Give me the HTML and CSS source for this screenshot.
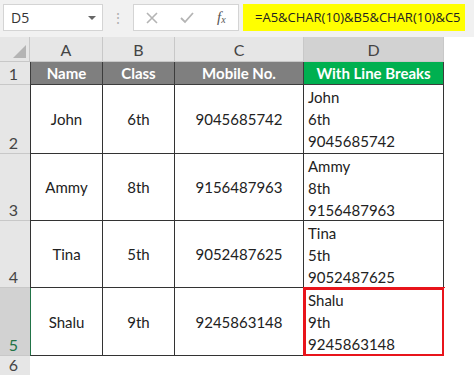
FILE: index.html
```
<!DOCTYPE html>
<html>
	<head>
		<meta charset="utf-8" />
		<title>Line Breaks</title>
		<link rel="stylesheet" href="styles.css">
	</head>
	<body>
		<div class="toolbar">
			<div class="namebox">
				<span>D5</span>
				<span class="arrow"></span>
			</div>
			<div class="dots">&#8942;</div>
			<div class="fxbox">
				<svg class="ico" width="14" height="14" viewBox="0 0 14 14"><path d="M2 2 L12 12 M12 2 L2 12" stroke="#b4b4b4" stroke-width="1.6" fill="none"/></svg>
				<svg class="ico" width="16" height="14" viewBox="0 0 16 14"><path d="M2 7 L6 11 L14 2" stroke="#b4b4b4" stroke-width="1.8" fill="none"/></svg>
				<span class="fx">f<sub>x</sub></span>
			</div>
			<div class="formula">=A5&amp;CHAR(10)&amp;B5&amp;CHAR(10)&amp;C5</div>
		</div>

		<div class="sheet">
			<div class="corner"><span></span></div>
			<div class="colhead">A</div>
			<div class="colhead">B</div>
			<div class="colhead">C</div>
			<div class="colhead sel">D</div>
			<div class="blank"></div>

			<div class="rowhead">1</div>
			<div class="cell head first">Name</div>
			<div class="cell head">Class</div>
			<div class="cell head">Mobile No.</div>
			<div class="cell head green">With Line Breaks</div>
			<div class="blank"></div>

			<div class="rowhead">2</div>
			<div class="cell first">John</div>
			<div class="cell">6th</div>
			<div class="cell">9045685742</div>
			<div class="cell lines">John<br>6th<br>9045685742</div>
			<div class="blank"></div>

			<div class="rowhead">3</div>
			<div class="cell first">Ammy</div>
			<div class="cell">8th</div>
			<div class="cell">9156487963</div>
			<div class="cell lines">Ammy<br>8th<br>9156487963</div>
			<div class="blank"></div>

			<div class="rowhead">4</div>
			<div class="cell first">Tina</div>
			<div class="cell">5th</div>
			<div class="cell">9052487625</div>
			<div class="cell lines">Tina<br>5th<br>9052487625</div>
			<div class="blank"></div>

			<div class="rowhead sel">5</div>
			<div class="cell first active">Shalu</div>
			<div class="cell">9th</div>
			<div class="cell">9245863148</div>
			<div class="cell lines marked">Shalu<br>9th<br>9245863148</div>
			<div class="blank"></div>

			<div class="rowhead last">6</div>
			<div class="empty"></div>
			<div class="empty"></div>
			<div class="empty"></div>
			<div class="empty"></div>
			<div class="blank"></div>
		</div>
	</body>
</html>
```

FILE: styles.css
```
html, body {
	margin: 0;
	padding: 0;
	background: #ffffff;
}

body {
	width: 474px;
	height: 375px;
	overflow: hidden;
	font-family: Lato, "Open Sans", sans-serif;
	color: #222222;
}

/* formula bar */
.toolbar {
	height: 37px;
	background: #f1f1f1;
	display: flex;
	align-items: flex-start;
	padding-top: 4px;
	box-sizing: border-box;
}

.namebox {
	margin-left: 3px;
	width: 100px;
	height: 27px;
	box-sizing: border-box;
	background: #fff;
	border: 1px solid #d4d4d4;
	display: flex;
	align-items: center;
	justify-content: space-between;
	padding: 0 6px 0 7px;
	font-family: "Open Sans", sans-serif;
	font-size: 14px;
	color: #333;
}

.namebox .arrow {
	width: 0;
	height: 0;
	border-left: 4px solid transparent;
	border-right: 4px solid transparent;
	border-top: 4px solid #666;
}

.dots {
	width: 30px;
	text-align: center;
	line-height: 27px;
	color: #b0b0b0;
	font-size: 14px;
}

.fxbox {
	width: 106px;
	height: 27px;
	box-sizing: border-box;
	background: #fff;
	border: 1px solid #d4d4d4;
	display: flex;
	align-items: center;
	padding-left: 11px;
	gap: 20px;
}

.fx {
	font-family: "Liberation Serif", serif;
	font-style: italic;
	font-size: 15px;
	color: #555;
	margin-left: 2px;
}

.fx sub {
	font-size: 10px;
	vertical-align: -1px;
}

.formula {
	margin-left: 4px;
	width: 222px;
	height: 27px;
	background: #ffff00;
	box-sizing: border-box;
	padding-left: 12px;
	line-height: 27px;
	font-family: "Open Sans", sans-serif;
	font-size: 13px;
	color: #222;
	white-space: nowrap;
}

/* sheet grid */
.sheet {
	display: grid;
	grid-template-columns: 30px 73px 72px 129px 140px 1fr;
	grid-template-rows: 25px 23px 69px 67px 67px 68px 30px;
}

.corner {
	background: #e6e6e6;
	border-right: 1px solid #c8c8c8;
	border-bottom: 1px solid #c8c8c8;
	position: relative;
}

.corner span {
	position: absolute;
	right: 3px;
	bottom: 3px;
	width: 0;
	height: 0;
	border-left: 13px solid transparent;
	border-bottom: 13px solid #b4b4b4;
}

.colhead {
	background: #e6e6e6;
	border-right: 1px solid #c8c8c8;
	border-bottom: 1px solid #c8c8c8;
	text-align: center;
	line-height: 25px;
	font-size: 16px;
	color: #444;
}

.colhead.sel {
	background: #d2d2d2;
	color: #444;
}

.rowhead {
	background: #e6e6e6;
	border-bottom: 1px solid #c8c8c8;
	display: flex;
	align-items: flex-end;
	justify-content: center;
	padding-right: 3px;
	font-size: 16px;
	color: #444;
	line-height: 20px;
}

.rowhead.sel {
	background: #d2d2d2;
	color: #217346;
}

.rowhead.last {
	align-items: flex-start;
	padding-top: 0;
	line-height: 18px;
}

.blank {
	background: #fff;
}

.cell {
	border-right: 1.5px solid #333;
	border-bottom: 1.5px solid #333;
	display: flex;
	align-items: center;
	justify-content: center;
	font-size: 15px;
	color: #222;
}

.cell.first {
	border-left: 1.5px solid #333;
}

.cell.active {
	border-left: 1.5px solid #217346;
}

.cell.head {
	background: #7f7f7f;
	color: #fff;
	font-weight: bold;
	border-color: #3c3c3c;
}

.cell.green {
	background: #00b050;
}

.cell.lines {
	display: block;
	text-align: left;
	padding: 1px 0 0 4px;
	line-height: 22px;
}

.cell.marked {
	outline: 3px solid #e8141b;
	outline-offset: -2px;
}

.empty {
	background: #fff;
}
```
